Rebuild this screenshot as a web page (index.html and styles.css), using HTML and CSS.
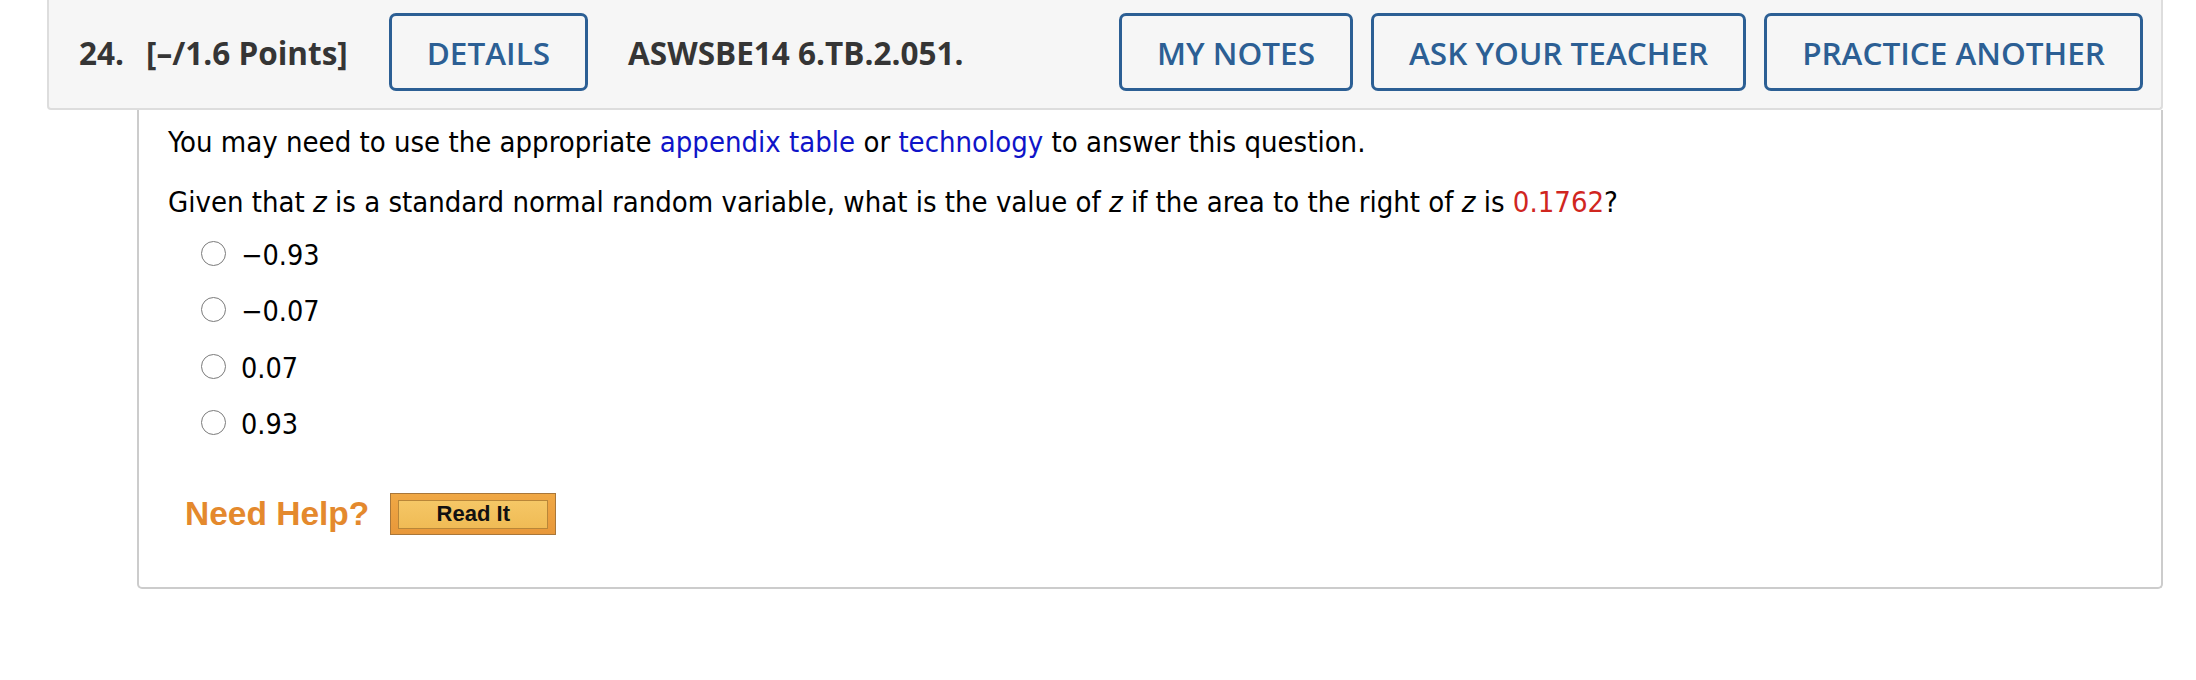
FILE: index.html
```html
<!DOCTYPE html>
<html lang="en">
<head>
<meta charset="utf-8">
<title>Question 24</title>
<link rel="stylesheet" href="styles.css">
</head>
<body>
<div class="question">
  <div class="q-header">
    <span class="q-num">24.</span>
    <span class="q-points">[–/1.6 Points]</span>
    <a class="hbtn">DETAILS</a>
    <span class="q-code">ASWSBE14 6.TB.2.051.</span>
    <div class="hbtn-group">
      <a class="hbtn">MY NOTES</a>
      <a class="hbtn">ASK YOUR TEACHER</a>
      <a class="hbtn">PRACTICE ANOTHER</a>
    </div>
  </div>
  <div class="q-body">
    <p class="intro">You may need to use the appropriate <a class="link">appendix table</a> or <a class="link">technology</a> to answer this question.</p>
    <p class="prompt">Given that <i>z</i> is a standard normal random variable, what is the value of <i>z</i> if the area to the right of <i>z</i> is <span class="val">0.1762</span>?</p>
    <ul class="options">
      <li class="opt"><span class="radio"></span><span class="opt-text">−0.93</span></li>
      <li class="opt"><span class="radio"></span><span class="opt-text">−0.07</span></li>
      <li class="opt"><span class="radio"></span><span class="opt-text">0.07</span></li>
      <li class="opt"><span class="radio"></span><span class="opt-text">0.93</span></li>
    </ul>
    <div class="help">
      <span class="need">Need Help?</span>
      <span class="readit"><span class="readit-inner">Read It</span></span>
    </div>
  </div>
</div>
</body>
</html>
```

FILE: styles.css
```css
html, body {
  margin: 0;
  padding: 0;
  background: #ffffff;
}

.question {
  margin-left: 47px;
  width: 2116px;
}

.q-header {
  display: flex;
  align-items: center;
  box-sizing: border-box;
  height: 110px;
  padding: 13px 18px 17px 30px;
  background: #f6f6f6;
  border-left: 2px solid #dddddd;
  border-right: 2px solid #dddddd;
  border-bottom: 2px solid #dddddd;
  border-radius: 0 0 4px 4px;
  font-family: "Open Sans", sans-serif;
  font-size: 31.5px;
  color: #353535;
}

.q-num {
  font-weight: 700;
  margin-right: 22px;
}

.q-points {
  font-weight: 700;
  margin-right: 41px;
}

.q-code {
  font-weight: 700;
  margin-left: 40px;
}

.hbtn {
  display: flex;
  align-items: center;
  box-sizing: border-box;
  height: 78px;
  padding: 0 35px;
  border: 3px solid #2c5f94;
  border-radius: 7px;
  color: #2c5f94;
  font-weight: 600;
  white-space: nowrap;
}

.hbtn-group {
  display: flex;
  gap: 18px;
  margin-left: auto;
}

.hbtn-group .hbtn:first-child {
  margin-left: 4px;
}

.q-body {
  margin-left: 90px;
  box-sizing: border-box;
  height: 479px;
  padding: 16px 29px 0 29px;
  border-left: 2px solid #cccccc;
  border-right: 2px solid #cccccc;
  border-bottom: 2px solid #cccccc;
  border-radius: 0 0 5px 5px;
  font-family: "DejaVu Sans Condensed", "DejaVu Sans", Verdana, sans-serif;
  font-size: 29px;
  line-height: 32px;
  color: #000000;
}

.intro {
  margin: 0;
}

.prompt {
  margin: 28px 0 0 0;
}

.link {
  color: #0f14c8;
}

.val {
  color: #d0261f;
}

.options {
  list-style: none;
  margin: 23px 0 0 33px;
  padding: 0;
  display: flex;
  flex-direction: column;
  gap: 26.3px;
  font-size: 28.5px;
  line-height: 30px;
}

.opt {
  display: flex;
  align-items: flex-start;
}

.radio {
  box-sizing: border-box;
  width: 25px;
  height: 25px;
  border: 1.5px solid #7b7b7b;
  border-radius: 50%;
  margin-right: 15px;
  background: #ffffff;
}

.help {
  display: flex;
  align-items: center;
  margin: 53px 0 0 17px;
  height: 42px;
}

.need {
  font-family: "Liberation Sans", Arial, sans-serif;
  font-weight: 700;
  font-size: 33.5px;
  line-height: 37px;
  color: #e4892d;
  margin-right: 21px;
}

.readit {
  box-sizing: border-box;
  display: flex;
  width: 166px;
  height: 42px;
  padding: 6px 7px 5px 7px;
  border: 1px solid #a9773a;
  background: linear-gradient(#f0a845, #e8983a);
}

.readit-inner {
  flex: 1;
  display: flex;
  align-items: center;
  justify-content: center;
  border: 1px solid #b98638;
  background: linear-gradient(#f5c766, #f0bb55);
  font-family: "Liberation Sans", Arial, sans-serif;
  font-weight: 700;
  font-size: 22px;
  color: #111111;
}
```
